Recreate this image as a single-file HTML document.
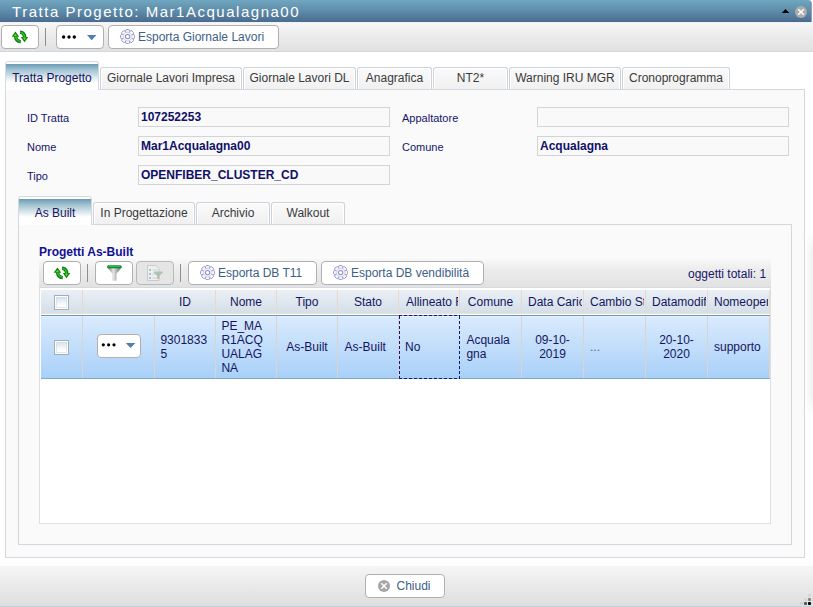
<!DOCTYPE html>
<html><head><meta charset="utf-8">
<style>
*{box-sizing:border-box;margin:0;padding:0}
html,body{width:813px;height:607px;overflow:hidden;background:#fff;font-family:"Liberation Sans",sans-serif;font-size:12px;color:#333}
.abs{position:absolute}
#title{left:0;top:0;width:812px;height:22px;background:linear-gradient(#70a6bf,#5f8fac 45%,#4b6b8f);border-radius:0 4px 0 0;border-right:1px solid #9a9cc0}
#title span{position:absolute;left:12px;top:3px;color:#fff;font-size:15px;letter-spacing:1.52px;white-space:nowrap}
#tb{left:0;top:22px;width:813px;height:30px;background:linear-gradient(#f7f7f7,#ededed 40%,#e1e1e1);border-bottom:1px solid #d3d8de;border-top:1px solid #f2f0f8}
.btn{position:absolute;background:#fff;border:1px solid #b0b0b0;border-radius:4px;color:#3d6086;font-size:12px;white-space:nowrap}
.sep{position:absolute;width:1px;background:#8e8e8e}
.tab{position:absolute;height:22px;border:1px solid #cdd3da;border-bottom:none;border-radius:3px 3px 0 0;background:linear-gradient(#fafafa,#f0f0f0);color:#3a3a3a;font-size:12px;text-align:center;line-height:21px;white-space:nowrap;box-shadow:inset 1px 1px 0 0 #fff,inset -1px 0 0 0 #fff}
.tab.act{background:linear-gradient(#fff 0,#fff 2px,#699cb5 2px,#a4c3d2 8px,#fff 20px);color:#16165e;border-color:#d3dbe2;box-shadow:none}
.panel{position:absolute;border:1px solid #d3d8de;background:#fafafa}
.lbl{position:absolute;font-size:11px;color:#15156a;white-space:nowrap}
.inp{position:absolute;height:20px;width:252px;border:1px solid #d2d4d8;background:#f9f9f9;font-weight:bold;font-size:12px;color:#10106a;padding:1px 0 0 2px;line-height:16px;white-space:nowrap}
.hc{position:absolute;top:0;height:23px;line-height:25px;text-align:center;color:#15155e;font-size:12px;overflow:hidden;white-space:nowrap;border-right:1px solid #ead9c8}
.rc{position:absolute;top:0;height:62px;padding-bottom:1px;color:#15155e;font-size:12px;border-right:1px solid #d9d4cc;display:flex;align-items:center;line-height:14px}
.cb{position:absolute;width:15px;height:15px;border:1px solid #a6acb8;background:linear-gradient(#cfe0ea,#fff 75%);box-shadow:inset 0 0 0 1px #fff,inset 0 0 0 2px rgba(200,220,232,.6)}
</style></head><body>
<div id="title" class="abs"><span>Tratta Progetto: Mar1Acqualagna00</span>
<svg class="abs" style="left:781px;top:8px" width="9" height="6"><path d="M0.7 5.1 L4.5 0.9 L8.3 5.1Z" fill="#000"/></svg>
<svg class="abs" style="left:795px;top:6px" width="12" height="12"><circle cx="6" cy="6" r="6" fill="#adadad"/><path d="M3.2 3.2L8.8 8.8M8.8 3.2L3.2 8.8" stroke="#fff" stroke-width="1.5"/></svg>
</div>
<div id="tb" class="abs"></div>
<!-- toolbar buttons -->
<div class="btn" style="left:1px;top:25px;width:38px;height:24px">
<svg class="abs" style="left:6px;top:0px" width="24" height="22" viewBox="0 0 24 22"><g fill="none" stroke-linecap="butt"><path d="M7.6 10 Q7.6 15.2 12.8 15.6" stroke="#0b7d0b" stroke-width="3.4"/><path d="M7.6 10 Q7.8 14.6 12.6 15.4" stroke="#2fc02f" stroke-width="1.4"/><path d="M12 6.2 Q16.6 6.4 16.6 11.6" stroke="#0b7d0b" stroke-width="3.4"/><path d="M12.2 6.4 Q16.4 6.8 16.5 11.6" stroke="#2fc02f" stroke-width="1.4"/></g><path d="M7.4 5.4 L11.2 10.8 L3.7 10.8Z" fill="#0b7d0b"/><path d="M7.4 7.4 L9.3 10.2 L5.6 10.2Z" fill="#55dd22"/><path d="M16.5 16.2 L12.8 10.9 L20.2 10.9Z" fill="#0b7d0b"/><path d="M16.5 14.3 L14.7 11.5 L18.3 11.5Z" fill="#55dd22"/></svg>
</div>
<div class="sep" style="left:45px;top:28px;height:18px"></div>
<div class="btn" style="left:56px;top:25px;width:48px;height:24px">
<svg class="abs" style="left:0;top:0" width="46" height="22"><circle cx="6.6" cy="11" r="1.7" fill="#000"/><circle cx="12" cy="11" r="1.7" fill="#000"/><circle cx="17.3" cy="11" r="1.7" fill="#000"/><path d="M30 9 L39.4 9 L34.7 14.2Z" fill="#4f7fae"/></svg>
</div>
<div class="btn" style="left:108px;top:25px;width:171px;height:24px"><svg class="abs gear" style="left:11.2px;top:3px" width="15.2" height="15.2" viewBox="0 0 16 16"><g fill="#fdfdff" stroke="#8a8ac0" stroke-width="0.95">
<rect x="5.9" y="0.6" width="4.2" height="3.4" rx="1.1" transform="rotate(0 8 8)"/><rect x="5.9" y="0.6" width="4.2" height="3.4" rx="1.1" transform="rotate(45 8 8)"/><rect x="5.9" y="0.6" width="4.2" height="3.4" rx="1.1" transform="rotate(90 8 8)"/><rect x="5.9" y="0.6" width="4.2" height="3.4" rx="1.1" transform="rotate(135 8 8)"/><rect x="5.9" y="0.6" width="4.2" height="3.4" rx="1.1" transform="rotate(180 8 8)"/><rect x="5.9" y="0.6" width="4.2" height="3.4" rx="1.1" transform="rotate(225 8 8)"/><rect x="5.9" y="0.6" width="4.2" height="3.4" rx="1.1" transform="rotate(270 8 8)"/><rect x="5.9" y="0.6" width="4.2" height="3.4" rx="1.1" transform="rotate(315 8 8)"/>
<circle cx="8" cy="8" r="4.7" stroke="#c4c4e0" stroke-width=".8" fill="#f5f5fb"/>
<circle cx="8" cy="8" r="2.3" fill="#fff" stroke="#8e8ec0" stroke-width="1.1"/>
</g></svg><span class="abs" style="left:29px;top:4px">Esporta Giornale Lavori</span></div>



<!-- main panel -->
<div class="panel" style="left:5px;top:89px;width:800px;height:469px"></div>
<div class="tab act" style="left:5px;top:61px;width:94px;height:29px;line-height:32px">Tratta Progetto</div>
<div class="tab" style="left:100px;top:67px;width:142px">Giornale Lavori Impresa</div>
<div class="tab" style="left:243px;top:67px;width:113px">Giornale Lavori DL</div>
<div class="tab" style="left:357px;top:67px;width:75px">Anagrafica</div>
<div class="tab" style="left:433px;top:67px;width:75px">NT2*</div>
<div class="tab" style="left:509px;top:67px;width:112px">Warning IRU MGR</div>
<div class="tab" style="left:622px;top:67px;width:108px">Cronoprogramma</div>

<div class="lbl" style="left:27px;top:112px">ID Tratta</div>
<div class="lbl" style="left:27px;top:141px">Nome</div>
<div class="lbl" style="left:27px;top:170px">Tipo</div>
<div class="lbl" style="left:402px;top:112px">Appaltatore</div>
<div class="lbl" style="left:402px;top:141px">Comune</div>
<div class="inp" style="left:138px;top:107px">107252253</div>
<div class="inp" style="left:138px;top:136px">Mar1Acqualagna00</div>
<div class="inp" style="left:138px;top:165px">OPENFIBER_CLUSTER_CD</div>
<div class="inp" style="left:537px;top:107px"></div>
<div class="inp" style="left:537px;top:136px">Acqualagna</div>

<!-- inner panel -->
<div class="panel" style="left:18px;top:224px;width:774px;height:321px"></div>
<div class="tab act" style="left:18px;top:196px;width:74px;height:29px;line-height:32px">As Built</div>
<div class="tab" style="left:93px;top:202px;width:102px">In Progettazione</div>
<div class="tab" style="left:196px;top:202px;width:74px">Archivio</div>
<div class="tab" style="left:271px;top:202px;width:74px">Walkout</div>

<div class="abs" style="left:39px;top:245px;font-weight:bold;color:#101094;font-size:12px;white-space:nowrap">Progetti As-Built</div>
<div class="abs" style="left:39px;top:259px;width:732px;height:29px;background:linear-gradient(#f8f8f8,#ececec 40%,#e2e2e2);border-bottom:1px solid #d3dae1"></div>
<div class="btn" style="left:43px;top:261px;width:38px;height:24px">
<svg class="abs" style="left:6px;top:0px" width="24" height="22" viewBox="0 0 24 22"><g fill="none" stroke-linecap="butt"><path d="M7.6 10 Q7.6 15.2 12.8 15.6" stroke="#0b7d0b" stroke-width="3.4"/><path d="M7.6 10 Q7.8 14.6 12.6 15.4" stroke="#2fc02f" stroke-width="1.4"/><path d="M12 6.2 Q16.6 6.4 16.6 11.6" stroke="#0b7d0b" stroke-width="3.4"/><path d="M12.2 6.4 Q16.4 6.8 16.5 11.6" stroke="#2fc02f" stroke-width="1.4"/></g><path d="M7.4 5.4 L11.2 10.8 L3.7 10.8Z" fill="#0b7d0b"/><path d="M7.4 7.4 L9.3 10.2 L5.6 10.2Z" fill="#55dd22"/><path d="M16.5 16.2 L12.8 10.9 L20.2 10.9Z" fill="#0b7d0b"/><path d="M16.5 14.3 L14.7 11.5 L18.3 11.5Z" fill="#55dd22"/></svg>
</div>
<div class="sep" style="left:87px;top:264px;height:18px"></div>
<div class="btn" style="left:95px;top:261px;width:38px;height:24px">
<svg class="abs" style="left:9.6px;top:2.2px" width="18" height="18" viewBox="0 0 18 18"><linearGradient id="fg" x1="0" x2="1"><stop offset="0" stop-color="#6c6c6c"/><stop offset=".42" stop-color="#e6e6e6"/><stop offset="1" stop-color="#666"/></linearGradient><path d="M1.6 3.8 L15.2 3.8 L10.5 9.8 L10.5 16.8 L6.5 16.8 L6.5 9.8Z" fill="url(#fg)"/><rect x="1" y="1.2" width="14.8" height="3.1" rx="1.5" fill="#0a8a2a"/><rect x="2.4" y="1.9" width="12" height="1.2" rx=".6" fill="#2cc05a"/></svg>
</div>
<div class="btn" style="left:136px;top:261px;width:38px;height:24px;background:#e5e5e5;border-color:#b8b8b8">
<svg class="abs" style="left:8px;top:1px" width="20" height="20" viewBox="0 0 20 20"><path d="M2.5 2.5 L11 2.5 L14 5.5 L14 17.5 L2.5 17.5Z" fill="#eeeeee" stroke="#cacaca"/><rect x="4" y="6" width="2" height="2" fill="#a9c4e2"/><rect x="4" y="10" width="2" height="2" fill="#a9c4e2"/><rect x="4" y="14" width="2" height="2" fill="#a9c4e2"/><path d="M7.5 7h5M7.5 11h3M7.5 15h5" stroke="#d0d0d0"/><path d="M9 9.5 L17.6 9.5 L14.4 13 L14.4 16 L12.2 16 L12.2 13Z" fill="#b9b9b9"/><rect x="8.6" y="8.4" width="9.4" height="1.6" rx=".8" fill="#9ad2aa"/></svg>
</div>
<div class="sep" style="left:180px;top:264px;height:18px"></div>
<div class="btn" style="left:188px;top:261px;width:129px;height:24px"><svg class="abs" style="left:11.2px;top:3px" width="15.2" height="15.2" viewBox="0 0 16 16"><g fill="#fdfdff" stroke="#8a8ac0" stroke-width="0.95">
<rect x="5.9" y="0.6" width="4.2" height="3.4" rx="1.1" transform="rotate(0 8 8)"/><rect x="5.9" y="0.6" width="4.2" height="3.4" rx="1.1" transform="rotate(45 8 8)"/><rect x="5.9" y="0.6" width="4.2" height="3.4" rx="1.1" transform="rotate(90 8 8)"/><rect x="5.9" y="0.6" width="4.2" height="3.4" rx="1.1" transform="rotate(135 8 8)"/><rect x="5.9" y="0.6" width="4.2" height="3.4" rx="1.1" transform="rotate(180 8 8)"/><rect x="5.9" y="0.6" width="4.2" height="3.4" rx="1.1" transform="rotate(225 8 8)"/><rect x="5.9" y="0.6" width="4.2" height="3.4" rx="1.1" transform="rotate(270 8 8)"/><rect x="5.9" y="0.6" width="4.2" height="3.4" rx="1.1" transform="rotate(315 8 8)"/>
<circle cx="8" cy="8" r="4.7" stroke="#c4c4e0" stroke-width=".8" fill="#f5f5fb"/>
<circle cx="8" cy="8" r="2.3" fill="#fff" stroke="#8e8ec0" stroke-width="1.1"/>
</g></svg><span class="abs" style="left:29px;top:4px">Esporta DB T11</span></div>
<div class="btn" style="left:321px;top:261px;width:163px;height:24px"><svg class="abs" style="left:11.2px;top:3px" width="15.2" height="15.2" viewBox="0 0 16 16"><g fill="#fdfdff" stroke="#8a8ac0" stroke-width="0.95">
<rect x="5.9" y="0.6" width="4.2" height="3.4" rx="1.1" transform="rotate(0 8 8)"/><rect x="5.9" y="0.6" width="4.2" height="3.4" rx="1.1" transform="rotate(45 8 8)"/><rect x="5.9" y="0.6" width="4.2" height="3.4" rx="1.1" transform="rotate(90 8 8)"/><rect x="5.9" y="0.6" width="4.2" height="3.4" rx="1.1" transform="rotate(135 8 8)"/><rect x="5.9" y="0.6" width="4.2" height="3.4" rx="1.1" transform="rotate(180 8 8)"/><rect x="5.9" y="0.6" width="4.2" height="3.4" rx="1.1" transform="rotate(225 8 8)"/><rect x="5.9" y="0.6" width="4.2" height="3.4" rx="1.1" transform="rotate(270 8 8)"/><rect x="5.9" y="0.6" width="4.2" height="3.4" rx="1.1" transform="rotate(315 8 8)"/>
<circle cx="8" cy="8" r="4.7" stroke="#c4c4e0" stroke-width=".8" fill="#f5f5fb"/>
<circle cx="8" cy="8" r="2.3" fill="#fff" stroke="#8e8ec0" stroke-width="1.1"/>
</g></svg><span class="abs" style="left:29px;top:4px">Esporta DB vendibilità</span></div>
<div class="abs" style="left:688px;top:267px;font-size:12px;color:#15156a;white-space:nowrap">oggetti totali: 1</div>

<!-- grid -->
<div class="abs" style="left:39px;top:288px;width:732px;height:236px;border:1px solid #dce0e5;border-top:none;background:#fff;overflow:hidden"><div class="abs" style="left:0;top:0;width:1px;height:100px;background:#fff;z-index:5"></div>
 <div class="abs" id="gh" style="left:0;top:2px;width:730px;height:24px;background:linear-gradient(#eaeff5,#dfe7ef 50%,#d4dfe9);border-bottom:1px solid #f1dfca">
  <div class="hc" style="left:0;width:43px"><div class="cb" style="left:14px;top:5px"></div></div>
  <div class="hc" style="left:43px;width:133px;text-align:left;padding-left:96px">ID</div>
  <div class="hc" style="left:176px;width:61px">Nome</div>
  <div class="hc" style="left:237px;width:61px">Tipo</div>
  <div class="hc" style="left:298px;width:61px">Stato</div>
  <div class="hc" style="left:359px;width:61px;text-align:left;padding-left:7px"><div style="overflow:hidden;margin-right:1px">Allineato F</div></div>
  <div class="hc" style="left:420px;width:62px">Comune</div>
  <div class="hc" style="left:482px;width:62px;text-align:left;padding-left:6px"><div style="overflow:hidden;margin-right:1px">Data Caric</div></div>
  <div class="hc" style="left:544px;width:62px;text-align:left;padding-left:6px"><div style="overflow:hidden;margin-right:1px">Cambio St</div></div>
  <div class="hc" style="left:606px;width:62px;text-align:left;padding-left:6px"><div style="overflow:hidden;margin-right:1px">Datamodif</div></div>
  <div class="hc" style="left:668px;width:62px;text-align:left;padding-left:6px"><div style="overflow:hidden;margin-right:1px">Nomeoper</div></div>
 </div>
 <div class="abs" id="gr" style="left:0;top:27px;width:730px;height:64px;background:linear-gradient(#e6f1fe 0,#e6f1fe 1px,#d9eafd 1px,#c4dffb 45%,#a8d0f8);border-top:1px solid #6996c6;border-bottom:1px solid #7fa6d0">
  <div class="rc" style="left:0;width:43px"><div class="cb" style="left:14px;top:24px"></div></div>
  <div class="rc" style="left:43px;width:72px"><div class="btn" style="left:14px;top:18px;width:44px;height:24px">
  <svg class="abs" style="left:0;top:0" width="42" height="22"><circle cx="5.3" cy="9.8" r="1.6" fill="#000"/><circle cx="10.6" cy="9.8" r="1.6" fill="#000"/><circle cx="16" cy="9.8" r="1.6" fill="#000"/><path d="M27.8 7.9 L37.3 7.9 L32.55 13.1Z" fill="#4f7fae"/></svg></div></div>
  <div class="rc" style="left:115px;width:61px;padding-left:5.4px">9301833<br>5</div>
  <div class="rc" style="left:176px;width:61px;padding-left:5.4px">PE_MA<br>R1ACQ<br>UALAG<br>NA</div>
  <div class="rc" style="left:237px;width:61px;justify-content:center">As-Built</div>
  <div class="rc" style="left:298px;width:61px;padding-left:6.6px">As-Built</div>
  <div class="rc" style="left:359px;width:61px;padding-left:6px;border:none;top:-1px;height:64px;padding-bottom:1px;background:repeating-linear-gradient(90deg,#14148a 0 3px,transparent 3px 5px) 0 0/100% 1px no-repeat,repeating-linear-gradient(90deg,#14148a 0 3px,transparent 3px 5px) 0 100%/100% 1px no-repeat,repeating-linear-gradient(0deg,#14148a 0 3px,transparent 3px 5px) 0 0/1px 100% no-repeat,repeating-linear-gradient(0deg,#14148a 0 3px,transparent 3px 5px) 100% 0/1px 100% no-repeat">No</div>
  <div class="rc" style="left:420px;width:62px;padding-left:6.4px">Acquala<br>gna</div>
  <div class="rc" style="left:482px;width:62px;justify-content:center;text-align:center">09-10-<br>2019</div>
  <div class="rc" style="left:544px;width:62px;padding-left:6px;color:#47698f">...</div>
  <div class="rc" style="left:606px;width:62px;justify-content:center;text-align:center">20-10-<br>2020</div>
  <div class="rc" style="left:668px;width:62px;padding-left:6px">supporto</div>
 </div>
</div>

<div class="abs" style="left:805px;top:230px;width:8px;height:188px;background:linear-gradient(90deg,rgba(0,0,0,0),rgba(0,0,0,.06));-webkit-mask-image:linear-gradient(transparent,#000 12%,#000 88%,transparent);mask-image:linear-gradient(transparent,#000 12%,#000 88%,transparent)"></div>
<!-- footer -->
<div class="abs" style="left:0;top:566px;width:813px;height:41px;background:linear-gradient(#f6f6f6,#ececec 40%,#dedede);border-bottom:1px solid #c9d0d9"></div>
<div class="btn" style="left:365px;top:574px;width:80px;height:24px"><svg class="abs" style="left:12px;top:5px" width="12" height="12"><circle cx="6" cy="6" r="6" fill="#a6a6a6"/><path d="M3.3 3.3L8.7 8.7M8.7 3.3L3.3 8.7" stroke="#fff" stroke-width="1.5"/></svg><span class="abs" style="left:30.5px;top:4px">Chiudi</span></div>
<svg class="abs" style="left:799px;top:593px" width="13" height="13"><g><rect x="9" y="9" width="3" height="3" rx="1" fill="#000"/><rect x="5" y="9" width="3" height="3" rx="1" fill="#555"/><rect x="1" y="9" width="3" height="3" rx="1" fill="#d0d0d0"/><rect x="9" y="5" width="3" height="3" rx="1" fill="#888"/><rect x="5" y="5" width="3" height="3" rx="1" fill="#d4d4d4"/><rect x="9" y="1" width="3" height="3" rx="1" fill="#d4d4d4"/></g></svg>
</body></html>
